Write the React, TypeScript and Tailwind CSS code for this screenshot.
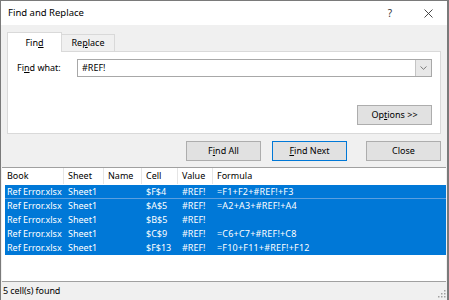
import React from 'react';

const FONT = "font-['Noto_Sans','Open_Sans',sans-serif]";

interface Row {
  book: string;
  sheet: string;
  name: string;
  cell: string;
  value: string;
  formula: string;
}

const ROWS: Row[] = [
  { book: 'Ref Error.xlsx', sheet: 'Sheet1', name: '', cell: '$F$4', value: '#REF!', formula: '=F1+F2+#REF!+F3' },
  { book: 'Ref Error.xlsx', sheet: 'Sheet1', name: '', cell: '$A$5', value: '#REF!', formula: '=A2+A3+#REF!+A4' },
  { book: 'Ref Error.xlsx', sheet: 'Sheet1', name: '', cell: '$B$5', value: '#REF!', formula: '' },
  { book: 'Ref Error.xlsx', sheet: 'Sheet1', name: '', cell: '$C$9', value: '#REF!', formula: '=C6+C7+#REF!+C8' },
  { book: 'Ref Error.xlsx', sheet: 'Sheet1', name: '', cell: '$F$13', value: '#REF!', formula: '=F10+F11+#REF!+F12' },
];

function U({ children }: { children: React.ReactNode }) {
  return <span className="underline underline-offset-1">{children}</span>;
}

function DlgButton({ children, focused }: { children: React.ReactNode; focused?: boolean }) {
  return (
    <div
      className={`w-[75px] h-[20px] flex items-center justify-center bg-[#e1e1e1] border ${
        focused ? 'border-[#0078d7]' : 'border-[#adadad]'
      }`}
    >
      {children}
    </div>
  );
}

export default function App() {
  return (
    <div
      className={`${FONT} text-[9px] text-black w-[449px] h-[300px] flex flex-col bg-[#f0f0f0] border-l border-t border-r-2 border-[#7a7a7a] overflow-hidden`}
    >
      {/* Title bar */}
      <div className="h-[24px] shrink-0 bg-white flex items-center pl-[7px] pr-[14px]">
        <span className="text-[9.5px]">Find and Replace</span>
        <span className="ml-auto text-[10px] text-[#333] mr-[32px]">?</span>
        <svg width="9" height="9" viewBox="0 0 9 9" className="text-[#333]">
          <path d="M0.5 0.5 L8.5 8.5 M8.5 0.5 L0.5 8.5" stroke="currentColor" strokeWidth="0.9" fill="none" />
        </svg>
      </div>

      {/* Tabs */}
      <div className="flex items-end pl-[6px] mt-[6px] h-[20px] shrink-0">
        <div className="w-[55px] h-[20px] bg-white border border-b-0 border-[#d9d9d9] flex items-center justify-center relative z-10 -mb-px">
          Fin<U>d</U>
        </div>
        <div className="w-[53px] h-[17px] bg-[#f0f0f0] border border-b-0 border-l-0 border-[#d9d9d9] flex items-center justify-center">
          Re<U>p</U>lace
        </div>
      </div>

      {/* Tab panel */}
      <div className="ml-[6px] w-[434px] h-[83px] shrink-0 bg-white border border-[#d9d9d9] flex flex-col pt-[7px] pl-[9px] pr-[8px]">
        <div className="flex items-center h-[18px]">
          <span className="w-[60px]">
            Fi<U>n</U>d what:
          </span>
          <div className="flex-1 h-[18px] border border-[#a8a8a8] flex items-center pl-[4px]">
            <span>#REF!</span>
            <div className="ml-auto w-[16px] h-full bg-[#e8e8e8] border-l border-[#c4c4c4] flex items-center justify-center">
              <svg width="7" height="4" viewBox="0 0 7 4">
                <path d="M0.5 0.5 L3.5 3.3 L6.5 0.5" stroke="#606060" strokeWidth="0.8" fill="none" />
              </svg>
            </div>
          </div>
        </div>
        <div className="mt-auto mb-[8px] flex justify-end">
          <DlgButton>
            Op<U>t</U>ions &gt;&gt;
          </DlgButton>
        </div>
      </div>

      {/* Action buttons */}
      <div className="flex h-[20px] mt-[7px] shrink-0 pl-[185px]">
        <DlgButton>
          F<U>i</U>nd All
        </DlgButton>
        <div className="ml-[11px]">
          <DlgButton focused>
            <U>F</U>ind Next
          </DlgButton>
        </div>
        <div className="ml-[19px]">
          <DlgButton>Close</DlgButton>
        </div>
      </div>

      {/* Results list */}
      <div className="mt-[6px] mx-px flex-1 bg-white border-t border-b border-[#a0a0a0] flex flex-col">
        <div className="grid grid-cols-[62px_40px_38px_36px_35px_1fr] h-[16px] shrink-0">
          {['Book', 'Sheet', 'Name', 'Cell', 'Value', 'Formula'].map((h, i) => (
            <div
              key={h}
              className={`flex items-center ${i === 0 ? 'pl-[5px]' : 'pl-[4px]'} ${
                i < 5 ? 'border-r border-[#e5e5e5]' : ''
              }`}
            >
              {h}
            </div>
          ))}
        </div>
        <div className="ml-[3px] mt-px flex flex-col">
          {ROWS.map((r, idx) => (
            <div
              key={r.cell}
              className={`grid grid-cols-[59px_40px_38px_36px_35px_1fr] h-[14px] bg-[#0078d7] text-white ${
                idx === 0 ? 'border-b border-[#5a9fe0]' : ''
              }`}
            >
              <div className="pl-[2px] flex items-center">{r.book}</div>
              <div className="pl-[4px] flex items-center">{r.sheet}</div>
              <div className="pl-[4px] flex items-center">{r.name}</div>
              <div className="pl-[4px] flex items-center">{r.cell}</div>
              <div className="pl-[4px] flex items-center">{r.value}</div>
              <div className="pl-[4px] flex items-center tracking-[0.2px]">{r.formula}</div>
            </div>
          ))}
        </div>
      </div>

      {/* Status bar */}
      <div className="h-[18px] shrink-0 flex items-center pl-[2px] relative">
        <span className="tracking-[-0.1px]">5 cell(s) found</span>
        <svg width="8" height="8" viewBox="0 0 8 8" className="absolute right-[1px] bottom-[2px]">
          <rect x="6" y="0" width="1.5" height="1.5" fill="#a0a0a0" />
          <rect x="3" y="3" width="1.5" height="1.5" fill="#a0a0a0" />
          <rect x="6" y="3" width="1.5" height="1.5" fill="#a0a0a0" />
          <rect x="0" y="6" width="1.5" height="1.5" fill="#a0a0a0" />
          <rect x="3" y="6" width="1.5" height="1.5" fill="#a0a0a0" />
          <rect x="6" y="6" width="1.5" height="1.5" fill="#a0a0a0" />
        </svg>
      </div>
    </div>
  );
}
